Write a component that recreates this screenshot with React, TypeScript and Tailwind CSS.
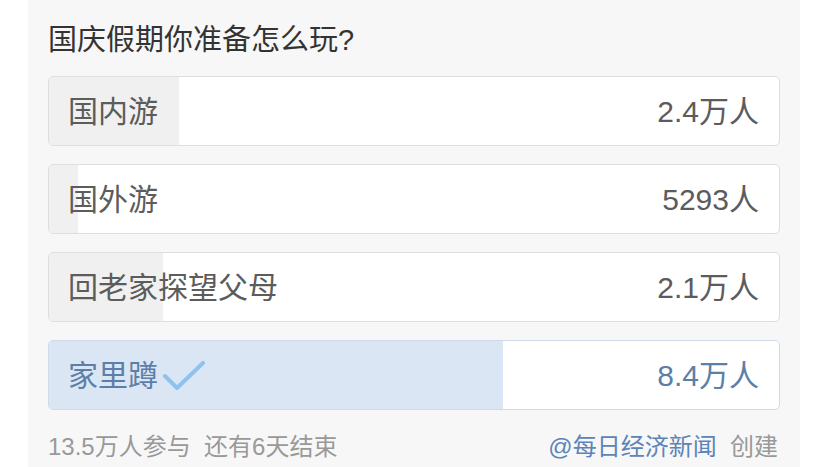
import React from "react";

type Option = { label: string; count: number; display: string; chosen?: boolean };

const TOTAL = 135000;

const options: Option[] = [
  { label: "国内游", count: 24000, display: "2.4万人" },
  { label: "国外游", count: 5293, display: "5293人" },
  { label: "回老家探望父母", count: 21000, display: "2.1万人" },
  { label: "家里蹲", count: 84000, display: "8.4万人", chosen: true },
];

function Check() {
  return (
    <svg width="44" height="30" viewBox="0 0 44 30" className="ml-[4px] mt-[2px]">
      <path
        d="M3 15 L15 27 L41 2"
        fill="none"
        stroke="#8fc3ee"
        strokeWidth="4"
        strokeLinecap="round"
        strokeLinejoin="round"
      />
    </svg>
  );
}

function PollRow({ option }: { option: Option }) {
  const pct = (option.count / TOTAL) * 100;
  return (
    <div
      className={`relative h-[70px] rounded-[5px] border overflow-hidden bg-white ${
        option.chosen ? "border-[#cddbeb]" : "border-[#dedede]"
      }`}
    >
      <div
        className={`absolute inset-y-0 left-0 ${option.chosen ? "bg-[#dae6f3]" : "bg-[#f0f0f0]"}`}
        style={{ width: `${pct}%` }}
      />
      <div className="relative flex h-full items-center justify-between pl-[19px] pr-5 text-[30px]">
        <div className="flex items-center">
          <span className={option.chosen ? "text-[#5c7fa9]" : "text-[#5c5c5c]"}>{option.label}</span>
          {option.chosen && <Check />}
        </div>
        <span className={option.chosen ? "text-[#5c7fa9]" : "text-[#5c5c5c]"}>{option.display}</span>
      </div>
    </div>
  );
}

export default function App() {
  return (
    <div
      className="w-[828px] h-[467px] overflow-hidden bg-white"
      style={{ fontFamily: '"Liberation Sans", "Noto Sans CJK SC", sans-serif' }}
    >
      <div className="mx-[28px] h-full bg-[#f7f7f7] px-5 pt-[22px]">
        <h1 className="text-[29px] leading-[36px] text-[#333333]">国庆假期你准备怎么玩?</h1>
        <div className="mt-[18px] flex flex-col gap-[18px]">
          {options.map((o) => (
            <PollRow key={o.label} option={o} />
          ))}
        </div>
        <div className="mt-[22px] flex items-center justify-between pr-[2px] text-[24px] leading-[30px] text-[#999999]">
          <span>13.5万人参与&nbsp;&nbsp;还有6天结束</span>
          <span>
            <span className="text-[#5d84b8]">@每日经济新闻</span>
            &nbsp;&nbsp;创建
          </span>
        </div>
      </div>
    </div>
  );
}
